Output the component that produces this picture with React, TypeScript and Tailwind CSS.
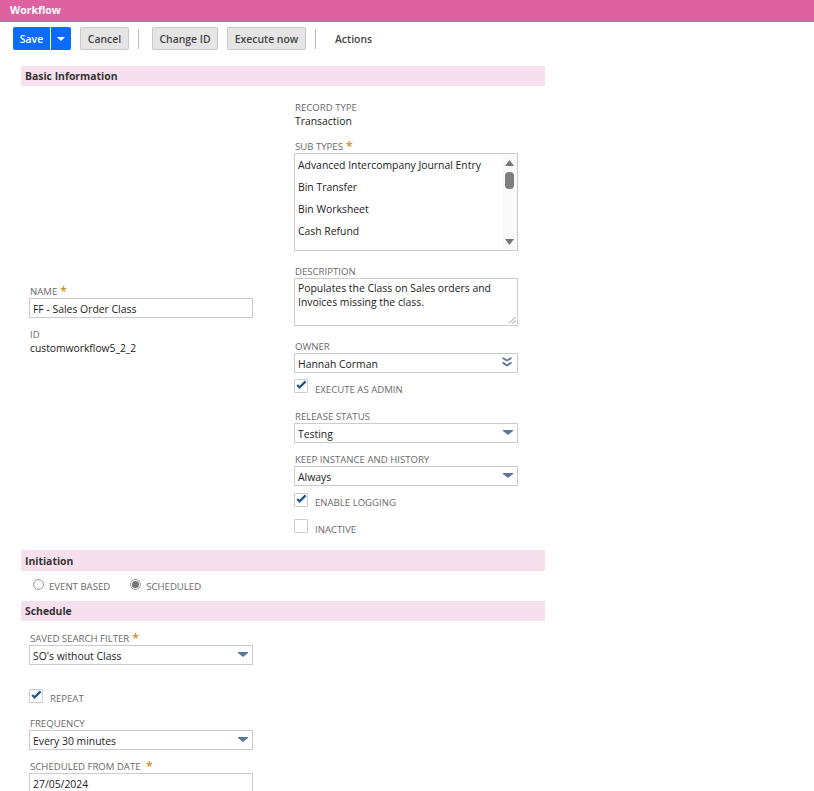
const font = { fontFamily: '"Open Sans", sans-serif' };

function Star() {
  return <span className="ml-[3px] align-[-1px] text-[12px] font-semibold leading-none text-[#d5880f]">*</span>;
}

function Label({ children, star, className = "" }: { children: React.ReactNode; star?: boolean; className?: string }) {
  return (
    <div className={`h-[14px] text-[9.6px] leading-[16px] text-[#6b6b6b] whitespace-nowrap ${className}`}>
      {children}
      {star && <Star />}
    </div>
  );
}

function Arrow() {
  return (
    <svg width="10" height="5" viewBox="0 0 10 5" className="absolute right-[4px] top-[6px]">
      <path d="M0 0H10V1L5 5L0 1Z" fill="#5a7799" />
    </svg>
  );
}

function Field({ value, kind, w = "w-[224px]" }: { value: string; kind?: "select" | "double"; w?: string }) {
  return (
    <div className={`relative h-[20px] ${w} border border-[#cccccc] bg-white pl-[3px] text-[10.4px] leading-[20px] text-[#222] whitespace-nowrap`}>
      {value}
      {kind === "select" && <Arrow />}
      {kind === "double" && (
        <svg width="10" height="10" viewBox="0 0 10 10" className="absolute right-[5px] top-[3px]">
          <path d="M0.5 0L5 2.4L9.5 0V2L5 4.6L0.5 2Z M0.5 4.6L5 7.2L9.5 4.6V6.8L5 9.6L0.5 6.8Z" fill="#5a7799" />
        </svg>
      )}
    </div>
  );
}

function Check({ on }: { on?: boolean }) {
  return (
    <div className="h-[14px] w-[14px] shrink-0 rounded-[1px] border border-[#cccccc] bg-white">
      {on && (
        <svg width="12" height="12" viewBox="0 0 12 12">
          <path d="M2.2 5L4.6 7.4L10.6 1.4" fill="none" stroke="#24568f" strokeWidth="2.3" />
        </svg>
      )}
    </div>
  );
}

function CheckRow({ label, on, className = "", labelClass = "mt-[4px]" }: { label: string; on?: boolean; className?: string; labelClass?: string }) {
  return (
    <div className={`flex h-[14px] ${className}`}>
      <Check on={on} />
      <span className={`ml-[7px] h-[14px] text-[9.6px] leading-[14px] text-[#6b6b6b] whitespace-nowrap ${labelClass}`}>{label}</span>
    </div>
  );
}

function Section({ title, className = "" }: { title: string; className?: string }) {
  return (
    <div className={`ml-[21px] flex w-[524px] items-center bg-[#f7e0ee] pl-[4px] pt-[2px] text-[10.4px] font-bold text-[#333] ${className}`}>
      {title}
    </div>
  );
}

function Btn({ children, className = "" }: { children: React.ReactNode; className?: string }) {
  return (
    <div className={`flex h-[23px] items-center justify-center rounded-[2px] border border-[#c8c8c8] bg-[#e5e5e5] pt-[2px] text-[10.4px] font-semibold text-[#444] ${className}`}>
      {children}
    </div>
  );
}

function Sep({ className = "" }: { className?: string }) {
  return <div className={`h-[20px] w-px bg-[#bbbbbb] ${className}`} />;
}

function Radio({ on }: { on?: boolean }) {
  return (
    <div className="-mt-[4px] flex h-[11px] w-[11px] shrink-0 items-center justify-center rounded-full border border-[#999] bg-white">
      {on && <div className="h-[7px] w-[7px] rounded-full bg-[#777]" />}
    </div>
  );
}

export default function App() {
  const items = ["Advanced Intercompany Journal Entry", "Bin Transfer", "Bin Worksheet", "Cash Refund"];
  return (
    <div className="h-[791px] w-[814px] overflow-hidden bg-white" style={font}>
      <div className="flex h-[22px] items-center bg-[#df62a0] pl-[10px] text-[10.5px] font-bold text-white">Workflow</div>

      <div className="ml-[13px] mt-[5px] flex h-[23px] items-center">
        <div className="flex h-[23px] w-[58px] rounded-[2px] bg-[#0a6cff] text-white">
          <div className="flex w-[37px] items-center justify-center pt-[2px] text-[10.4px] font-semibold">Save</div>
          <div className="w-px bg-white" />
          <div className="flex flex-1 items-center justify-center">
            <svg width="8" height="4" viewBox="0 0 8 4"><path d="M0 0H8L4 4Z" fill="#fff" /></svg>
          </div>
        </div>
        <Btn className="ml-[9px] w-[49px]">Cancel</Btn>
        <Sep className="ml-[9px]" />
        <Btn className="ml-[13px] w-[66px]">Change ID</Btn>
        <Btn className="ml-[9px] w-[79px]">Execute now</Btn>
        <Sep className="ml-[9px]" />
        <div className="ml-[19px] pt-[2px] text-[10.4px] font-semibold text-[#444]">Actions</div>
      </div>

      <Section title="Basic Information" className="mt-[16px] h-[20px]" />

      <div className="flex h-[464px]">
        <div className="ml-[30px] w-[265px] pt-[198px]">
          <Label star>NAME</Label>
          <div className="-ml-px"><Field value="FF - Sales Order Class" /></div>
          <Label className="mt-[9px]">ID</Label>
          <div className="h-[14px] text-[10.3px] leading-[14px] text-[#222]">customworkflow5_2_2</div>
        </div>

        <div className="-ml-px w-[224px] pt-[14px]">
          <Label className="pl-px">RECORD TYPE</Label>
          <div className="h-[14px] pl-px text-[10.4px] leading-[14px] text-[#222]">Transaction</div>
          <Label className="mt-[11px] pl-px" star>SUB TYPES</Label>
          <div className="relative h-[98px] w-[224px] border border-[#cccccc] bg-white pl-[3px]">
            {items.map((t) => (
              <div key={t} className="h-[22px] text-[10.4px] leading-[22px] text-[#222] whitespace-nowrap">{t}</div>
            ))}
            <div className="absolute right-0 top-0 h-full w-[15px] bg-[#fafafa]">
              <svg width="9" height="6" viewBox="0 0 9 6" className="absolute left-[3px] top-[6px]"><path d="M4.5 0L9 6H0Z" fill="#777" /></svg>
              <div className="absolute left-[3px] top-[18px] h-[17px] w-[9px] rounded-[4px] bg-[#7f7f7f]" />
              <svg width="9" height="6" viewBox="0 0 9 6" className="absolute bottom-[5px] left-[3px]"><path d="M0 0H9L4.5 6Z" fill="#777" /></svg>
            </div>
          </div>
          <Label className="mt-[13px] pl-px">DESCRIPTION</Label>
          <div className="relative h-[48px] w-[224px] border border-[#cccccc] bg-white pl-[3px] pt-[2px] text-[10.4px] leading-[14px] text-[#222]">
            <div>Populates the Class on Sales orders and</div>
            <div>Invoices missing the class.</div>
            <svg width="8" height="8" viewBox="0 0 8 8" className="absolute bottom-[1px] right-[1px]">
              <path d="M1 7.5L7.5 1M4.5 7.5L7.5 4.5" stroke="#777" strokeWidth="0.8" />
            </svg>
          </div>
          <Label className="mt-[13px] pl-px">OWNER</Label>
          <Field value="Hannah Corman" kind="double" />
          <CheckRow label="EXECUTE AS ADMIN" on className="mt-[6px]" />
          <Label className="mt-[16px] pl-px">RELEASE STATUS</Label>
          <Field value="Testing" kind="select" />
          <Label className="mt-[9px] pl-px">KEEP INSTANCE AND HISTORY</Label>
          <Field value="Always" kind="select" />
          <CheckRow label="ENABLE LOGGING" on className="mt-[7px]" labelClass="mt-[3px]" />
          <CheckRow label="INACTIVE" className="mt-[12px]" />
        </div>
      </div>

      <Section title="Initiation" className="h-[21px]" />
      <div className="flex h-[30px] items-center pl-[33px]">
        <Radio />
        <span className="ml-[5px] mt-[3px] text-[9.6px] text-[#6b6b6b]">EVENT BASED</span>
        <div className="ml-[20px]"><Radio on /></div>
        <span className="ml-[5px] mt-[3px] text-[9.6px] text-[#6b6b6b]">SCHEDULED</span>
      </div>
      <Section title="Schedule" className="h-[20px]" />

      <div className="pl-[29px] pt-[10px]">
        <Label className="pl-px" star>SAVED SEARCH FILTER</Label>
        <Field value="SO's without Class" kind="select" />
        <CheckRow label="REPEAT" on className="mt-[24px]" labelClass="mt-[3px]" />
        <Label className="mt-[13px] pl-px">FREQUENCY</Label>
        <Field value="Every 30 minutes" kind="select" />
        <Label className="mt-[9px] pl-px" star>SCHEDULED FROM DATE&nbsp;</Label>
        <Field value="27/05/2024" />
      </div>
    </div>
  );
}
